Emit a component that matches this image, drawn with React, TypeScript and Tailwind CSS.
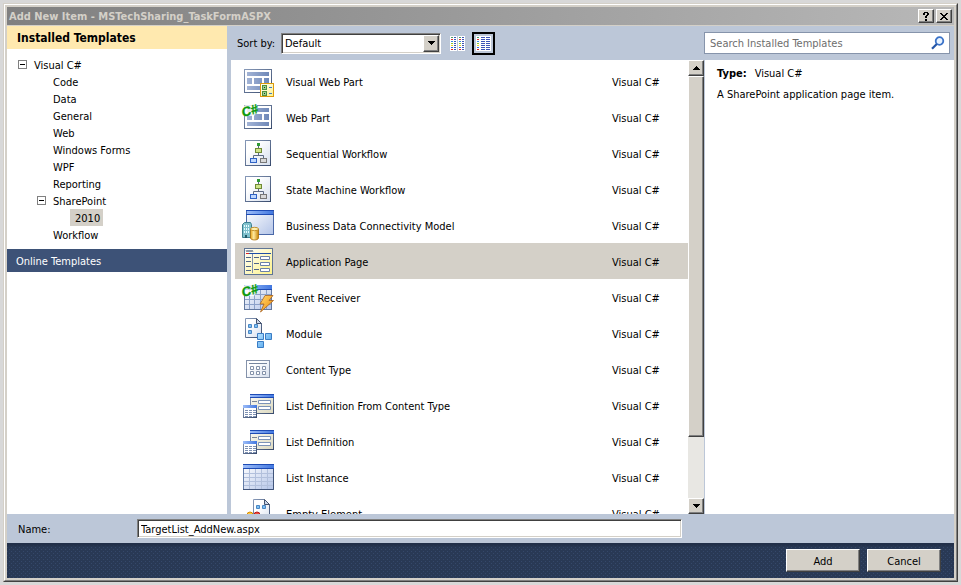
import { useState, type ReactNode } from "react";
import clsx from "clsx";

const RAISED =
  "border border-t-white border-l-white border-r-[#404040] border-b-[#404040] bg-[#d4d0c8] shadow-[inset_-1px_-1px_0_#808080]";
const SUNKEN =
  "border border-t-[#808080] border-l-[#808080] border-r-white border-b-white bg-white shadow-[inset_1px_1px_0_#404040,inset_-1px_-1px_0_#d4d0c8]";

// Shared gradients, referenced by id from every icon below
function IconDefs() {
  return (
    <svg className="absolute h-0 w-0" aria-hidden="true">
      <defs>
        <linearGradient id="bar" x1="0" x2="1">
          <stop offset="0" stopColor="#a3b4d6" />
          <stop offset="1" stopColor="#6f88b8" />
        </linearGradient>
        <linearGradient id="title" x1="0" x2="1">
          <stop offset="0" stopColor="#9dbdf8" />
          <stop offset="1" stopColor="#4177e0" />
        </linearGradient>
        <linearGradient id="pane" x1="0" y1="0" x2="1" y2="1">
          <stop offset="0" stopColor="#ffffff" />
          <stop offset="1" stopColor="#b3c4e8" />
        </linearGradient>
        <linearGradient id="paper" x1="0" y1="0" x2="1" y2="1">
          <stop offset="0.3" stopColor="#ffffff" />
          <stop offset="1" stopColor="#d5deed" />
        </linearGradient>
        <linearGradient id="edge" x1="0" y1="0" x2="1" y2="1">
          <stop offset="0" stopColor="#8799b8" />
          <stop offset="1" stopColor="#3a4c6e" />
        </linearGradient>
        <linearGradient id="cream" x1="0" y1="0" x2="1" y2="1">
          <stop offset="0" stopColor="#ffffff" />
          <stop offset="1" stopColor="#fdf288" />
        </linearGradient>
        <linearGradient id="beige" x1="0" y1="0" x2="1" y2="1">
          <stop offset="0" stopColor="#fbfaf2" />
          <stop offset="1" stopColor="#dcd9c0" />
        </linearGradient>
        <linearGradient id="block" x1="0" y1="0" x2="1" y2="1">
          <stop offset="0" stopColor="#b9e2ff" />
          <stop offset="1" stopColor="#3f9be8" />
        </linearGradient>
        <linearGradient id="gold" x1="0" x2="1">
          <stop offset="0" stopColor="#e8a317" />
          <stop offset="0.4" stopColor="#ffeaa0" />
          <stop offset="1" stopColor="#c98200" />
        </linearGradient>
        <linearGradient id="bolt" x1="0" y1="0" x2="1" y2="1">
          <stop offset="0" stopColor="#ffd873" />
          <stop offset="1" stopColor="#f08a00" />
        </linearGradient>
      </defs>
    </svg>
  );
}

function Icon({ children }: { children: ReactNode }) {
  return (
    <svg width="32" height="32" viewBox="0 0 32 32" className="shrink-0 overflow-visible" aria-hidden="true">
      {children}
    </svg>
  );
}

function CSharpMark() {
  return (
    <text
      x="1"
      y="16"
      transform="rotate(-16 1 16)"
      fontFamily="'Liberation Sans', sans-serif"
      fontWeight="bold"
      fontStyle="italic"
      fontSize="13"
      fill="#0b9a0b"
      stroke="#0b9a0b"
      strokeWidth=".4"
    >
      C#
    </text>
  );
}

function WebPartFrame() {
  return (
    <>
      <rect x="2.5" y="4.5" width="27" height="23" fill="#fff" stroke="url(#edge)" />
      <path fill="url(#bar)" d="M5 7h22v4H5zM5 13h5v6H5zM12 13h8v6h-8zM22 13h5v6h-5zM5 21h22v4H5z" />
    </>
  );
}

function VisualWebPartIcon() {
  return (
    <Icon>
      <WebPartFrame />
      <rect x="18.5" y="18.5" width="13" height="13" fill="url(#cream)" stroke="#dc9a0c" />
      <path fill="#4f8f3f" d="M20 20h5v5h-5zM20 26h5v5h-5z" />
      <path fill="#9fd08f" d="M21 21h3v3h-3zM21 27h3v3h-3z" />
      <path fill="#173f17" d="M22 22h1v1h-1zM22 28h1v1h-1z" />
      <path fill="#3f7ac8" d="M27 22h3v1h-3zM27 28h3v1h-3z" />
    </Icon>
  );
}

function WebPartIcon() {
  return (
    <Icon>
      <WebPartFrame />
      <path fill="#fff" opacity=".75" d="M0 6l9-5 6 0v10l-3 4H1z" />
      <CSharpMark />
    </Icon>
  );
}

function WorkflowIcon() {
  return (
    <Icon>
      <rect x="3.5" y="3.5" width="25" height="25" fill="url(#paper)" stroke="url(#edge)" />
      <path fill="none" stroke="#5c6a84" d="M16.5 9v9M11.5 21v-2.5h10V21" />
      <rect x="15" y="6" width="3" height="3" fill="#2f9a35" />
      <rect x="13.5" y="11.5" width="6" height="4" fill="#cfe48a" stroke="#6f8a35" />
      <rect x="8.5" y="21.5" width="6" height="4" fill="#bcd6ff" stroke="#2f62c4" />
      <rect x="18.5" y="21.5" width="6" height="4" fill="#d8d8d8" stroke="#777" />
    </Icon>
  );
}

function DataModelIcon() {
  return (
    <Icon>
      <rect x="4.5" y="1.5" width="27" height="24" fill="url(#pane)" stroke="#4a68a8" />
      <rect x="5" y="1" width="26" height="4" fill="url(#title)" />
      <path fill="#1d4bb5" d="M4 1h28v1H4zM4 5h28v1H4z" />
      <path fill="#7fc0cc" stroke="#3c8090" d="M.5 15.5l2-2h6l1 2v13h-9z" />
      <path fill="#e6fbff" d="M2 16h1v2H2zM4 16h1v2H4zM6 16h1v2H6zM2 19h1v2H2zM4 19h1v2H4zM6 19h1v2H6zM2 22h1v2H2zM4 22h1v2H4zM6 22h1v2H6z" />
      <path fill="#245a68" d="M3 26h2v3H3z" />
      <path fill="url(#gold)" stroke="#a86c08" strokeWidth=".8" d="M8.500 20v9c0 2.600 8 2.600 8 0v-9z" />
      <ellipse cx="12.500" cy="20" rx="4" ry="1.700" fill="#fff0b0" stroke="#b57c10" strokeWidth=".8" />
    </Icon>
  );
}

function ApplicationPageIcon() {
  return (
    <Icon>
      <rect x="2.500" y="3.500" width="28" height="26" fill="url(#cream)" stroke="#5f7595" />
      <path fill="none" stroke="#5b6b85" strokeWidth=".8" d="M4 5l1 2 1-2 1 2 1-2M8 5l1 2 1-2 1 2" />
      <path fill="#1f4fa8" d="M7 8h22v1H7z" />
      <path fill="#d22" d="M4 8h3v1H4z" />
      <path fill="#7f8fae" d="M10 9h1v19h-1z" />
      <path fill="#4f6488" d="M4 12h5v1H4zM4 16h5v1H4zM4 21h5v1H4zM4 25h5v1H4zM12 12h5v1h-5zM12 18h5v1h-5zM12 24h5v1h-5z" />
      <path fill="#fff" stroke="#6a80a8" d="M18.500 11.500h9v3h-9zM18.500 17.500h9v3h-9zM18.500 23.500h9v3h-9z" />
    </Icon>
  );
}

function EventReceiverIcon() {
  return (
    <Icon>
      <rect x="2.500" y="4.500" width="27" height="24" fill="url(#pane)" stroke="#62789f" />
      <rect x="2" y="4" width="28" height="5" fill="url(#title)" />
      <path fill="#1d4bb5" d="M2 8h28v1H2z" />
      <path fill="none" stroke="#8ba0c8" d="M3 13.500h26M3 18.500h26M3 23.500h26M7.500 9v19M12.500 9v19M18.500 9v19M24.500 9v19" />
      <path fill="url(#bolt)" stroke="#a8611a" strokeWidth=".8" d="M23 14.500h8l-4 5h4.500L18.500 31l3.500-8h-4z" />
      <path fill="#fff" opacity=".75" d="M0 6l9-5 6 0v10l-3 4H1z" />
      <CSharpMark />
    </Icon>
  );
}

function ModuleIcon() {
  return (
    <Icon>
      <path fill="url(#paper)" stroke="url(#edge)" d="M3.500 1.500h11l5 5v14h-16z" />
      <path fill="#cdd7e8" stroke="#44536f" d="M14.500 1.500v5h5z" />
      <path fill="#7cc0f4" stroke="#4a86c4" d="M6.500 7.500h3v3h-3zM12.500 7.500h3v3h-3zM6.500 13.500h3v3h-3z" />
      <path fill="url(#block)" stroke="#3a7cc4" d="M15.500 16.500h6v6h-6zM23.500 16.500h6v6h-6zM15.500 24.500h6v6h-6z" />
    </Icon>
  );
}

function ContentTypeIcon() {
  return (
    <Icon>
      <rect x="4.500" y="7.500" width="23" height="17" fill="url(#paper)" stroke="#8492aa" />
      <path fill="#76869f" d="M7 10h18v1H7z" />
      <path fill="#fff" stroke="#8492aa" d="M8.500 13.500h3v3h-3zM14.500 13.500h3v3h-3zM20.500 13.500h3v3h-3zM8.500 18.500h3v3h-3zM14.500 18.500h3v3h-3zM20.500 18.500h3v3h-3z" />
    </Icon>
  );
}

function ListDefinitionIcon() {
  return (
    <Icon>
      <rect x="8.500" y="5.500" width="23" height="19" fill="url(#beige)" stroke="url(#edge)" />
      <rect x="8" y="5" width="24" height="4" fill="url(#title)" />
      <path fill="#1d4bb5" d="M8 5h24v1H8zM8 8h24v1H8z" />
      <path fill="#7a8494" d="M10 12h5v1h-5z" />
      <path fill="#fff" stroke="#7c93b8" d="M16.500 11.500h12v3h-12zM16.500 17.500h12v3h-12z" />
      <rect x="1.500" y="16.500" width="13" height="12" fill="#fff" stroke="url(#edge)" />
      <rect x="1" y="16" width="14" height="3" fill="url(#title)" />
      <path fill="none" stroke="#7d90b2" strokeDasharray="3 1" d="M3 21.500h11M3 23.500h11M3 25.500h11M3 27.500h11" />
    </Icon>
  );
}

function ListInstanceIcon() {
  return (
    <Icon>
      <rect x="1.500" y="3.500" width="30" height="25" fill="url(#pane)" stroke="#647da8" />
      <rect x="1" y="3" width="31" height="5" fill="url(#title)" />
      <path fill="#1d4bb5" d="M1 3h31v1H1zM1 7h31v1H1z" />
      <path fill="none" stroke="#b2c0dc" d="M2 12.500h29M2 16.500h29M2 20.500h29M2 24.500h29M7.500 8v20M13.500 8v20M19.500 8v20M25.500 8v20" />
      <path fill="none" stroke="#40547a" d="M1 28.500h30.500V8" />
    </Icon>
  );
}

function EmptyElementIcon() {
  return (
    <Icon>
      <path fill="url(#paper)" stroke="url(#edge)" d="M11.500 2.500h11l5 5v21h-16z" />
      <path fill="#cdd7e8" stroke="#44536f" d="M22.500 2.500v5h5z" />
      <path fill="#7cc0f4" stroke="#4a86c4" d="M14.500 8.500h3v3h-3zM20.500 8.500h3v3h-3z" />
      <circle cx="8" cy="18" r="3" fill="#ffc93a" stroke="#d88a00" />
      <circle cx="15" cy="18" r="3" fill="#f04a3a" stroke="#b81818" />
    </Icon>
  );
}

const TEMPLATES = [
  { name: "Visual Web Part", icon: VisualWebPartIcon },
  { name: "Web Part", icon: WebPartIcon },
  { name: "Sequential Workflow", icon: WorkflowIcon },
  { name: "State Machine Workflow", icon: WorkflowIcon },
  { name: "Business Data Connectivity Model", icon: DataModelIcon },
  { name: "Application Page", icon: ApplicationPageIcon },
  { name: "Event Receiver", icon: EventReceiverIcon },
  { name: "Module", icon: ModuleIcon },
  { name: "Content Type", icon: ContentTypeIcon },
  { name: "List Definition From Content Type", icon: ListDefinitionIcon },
  { name: "List Definition", icon: ListDefinitionIcon },
  { name: "List Instance", icon: ListInstanceIcon },
  { name: "Empty Element", icon: EmptyElementIcon },
];

const TREE = [
  { label: "Visual C#", level: 0, open: true },
  { label: "Code", level: 1 },
  { label: "Data", level: 1 },
  { label: "General", level: 1 },
  { label: "Web", level: 1 },
  { label: "Windows Forms", level: 1 },
  { label: "WPF", level: 1 },
  { label: "Reporting", level: 1 },
  { label: "SharePoint", level: 1, open: true },
  { label: "2010", level: 2 },
  { label: "Workflow", level: 1 },
];

const INDENT = ["pl-[11px]", "pl-[30px]", "pl-[52px]"];

function TitleBar() {
  return (
    <header className="flex h-[18px] items-center gap-[2px] bg-linear-to-r from-[#808080] to-[#b8b8b8] pr-[2px] pl-[2px]">
      <h1 className="flex-1 pt-px text-[11px] font-bold text-[#d4d0c8]">
        Add New Item - MSTechSharing_TaskFormASPX
      </h1>
      <button aria-label="Help" className={clsx(RAISED, "flex h-[14px] w-4 items-center justify-center")}>
        <svg width="8" height="9" viewBox="0 0 8 9">
          <path fill="#000" d="M2 0h4v1H2zM1 1h2v2H1zM5 1h2v2H5zM4 3h2v1H4zM3 4h2v2H3zM3 7h2v2H3z" />
        </svg>
      </button>
      <button aria-label="Close" className={clsx(RAISED, "flex h-[14px] w-4 items-center justify-center")}>
        <svg width="8" height="7" viewBox="0 0 8 7">
          <path fill="#000" d="M0 0h2v1H0zM6 0h2v1H6zM1 1h2v1H1zM5 1h2v1H5zM2 2h4v1H2zM3 3h2v1H3zM2 4h4v1H2zM1 5h2v1H1zM5 5h2v1H5zM0 6h2v1H0zM6 6h2v1H6z" />
        </svg>
      </button>
    </header>
  );
}

function TemplateTree() {
  const [active, setActive] = useState("2010");

  return (
    <nav className="flex w-[220px] shrink-0 flex-col bg-white">
      <h2 className="flex h-[23px] items-center bg-[#ffe9af] pt-px pl-[10px] text-[12px] font-bold">
        Installed Templates
      </h2>
      <ul className="pt-[7px] pb-[6px]">
        {TREE.map((node) => (
          <li key={node.label} className={clsx("flex h-[17px] items-center", INDENT[node.level])}>
            <span className="flex w-[11px] shrink-0">
              {node.open && (
                <svg width="9" height="9" viewBox="0 0 9 9" aria-hidden="true">
                  <rect x=".5" y=".5" width="8" height="8" fill="#fff" stroke="#808080" />
                  <path fill="#000" d="M2 4h5v1H2z" />
                </svg>
              )}
            </span>
            <button
              className={clsx("h-[17px] pt-[2px] pr-[3px] pl-[5px]", active === node.label && "bg-[#d4d0c8]")}
              onClick={() => setActive(node.label)}
            >
              {node.label}
            </button>
          </li>
        ))}
      </ul>
      <button className="flex h-[23px] items-center bg-[#3d5277] pt-[2px] pl-[9px] text-white">
        Online Templates
      </button>
    </nav>
  );
}

const SWATCHES = ["#4b9c6b", "#e03030", "#3a8be0", "#8cc832", "#e8d820", "#3a6be0", "#e02020"];

function ListViewIcon({ detailed = false }: { detailed?: boolean }) {
  return (
    <svg width="15" height="15" viewBox="0 0 15 15" aria-hidden="true">
      <path fill="#fff" d={detailed ? "M0 0h15v15H0z" : "M0 0h7v15H0zM8 0h7v15H8z"} />
      {SWATCHES.map((color, i) => {
        const y = 1 + i * 2;
        return (
          <g key={color}>
            <rect x="1" y={y} width="2" height="1" fill={color} />
            <rect x={detailed ? 5 : 4} y={y} width={detailed ? 4 : 2} height="1" fill="#3d55b8" />
            {!detailed && <rect x="9" y={y} width="2" height="1" fill={color} />}
            <rect x={detailed ? 10 : 12} y={y} width={detailed ? 4 : 2} height="1" fill="#3d55b8" />
          </g>
        );
      })}
    </svg>
  );
}

function Toolbar() {
  return (
    <div className="flex h-[34px] shrink-0 items-center pr-1 pl-[10px]">
      <label htmlFor="sort" className="w-11 pt-px">
        Sort by:
      </label>
      <div className="relative h-[21px] w-[160px]">
        <select id="sort" className={clsx(SUNKEN, "h-[21px] w-full appearance-none pt-px pl-[3px] outline-none")}>
          <option>Default</option>
          <option>Name Ascending</option>
          <option>Name Descending</option>
        </select>
        <span className={clsx(RAISED, "pointer-events-none absolute top-[2px] right-[2px] flex h-[17px] w-4 items-center justify-center")}>
          <svg width="7" height="4" viewBox="0 0 7 4">
            <path d="M0 0h7v1H6v1H5v1H4v1H3V3H2V2H1V1H0z" />
          </svg>
        </span>
      </div>
      <button aria-label="Small icons" className="ml-[5px] flex h-[23px] w-[23px] items-center justify-center">
        <ListViewIcon />
      </button>
      <button aria-label="Medium icons" className="ml-[3px] flex h-[23px] w-[23px] items-center justify-center border-2 border-black">
        <ListViewIcon detailed />
      </button>
      <div className="ml-auto flex h-[22px] w-[246px] items-center border border-[#8694ab] bg-white pr-1 pl-[5px]">
        <input
          type="search"
          aria-label="Search Installed Templates"
          placeholder="Search Installed Templates"
          className="min-w-0 flex-1 pt-[2px] outline-none placeholder:text-[#6d6d6d]"
        />
        <svg width="14" height="14" viewBox="0 0 14 14" aria-hidden="true">
          <circle cx="8.500" cy="5" r="3.800" fill="#e8f3ff" stroke="#3a72c8" strokeWidth="1.800" />
          <path stroke="#2456a8" strokeWidth="2.200" d="M5.800 8L1 12.800" />
        </svg>
      </div>
    </div>
  );
}

function ScrollBar() {
  return (
    <div className="flex w-4 shrink-0 flex-col bg-[#e8e7e3]">
      <button aria-label="Scroll up" className={clsx(RAISED, "flex h-4 items-center justify-center")}>
        <svg width="7" height="4" viewBox="0 0 7 4">
          <path d="M3 0h1v1h1v1h1v1h1v1H0V3h1V2h1V1h1z" />
        </svg>
      </button>
      <div className={clsx(RAISED, "flex-1")} />
      <div className="h-[61px]" />
      <button aria-label="Scroll down" className={clsx(RAISED, "flex h-4 items-center justify-center")}>
        <svg width="7" height="4" viewBox="0 0 7 4">
          <path d="M0 0h7v1H6v1H5v1H4v1H3V3H2V2H1V1H0z" />
        </svg>
      </button>
    </div>
  );
}

function TemplateList() {
  const [selected, setSelected] = useState("Application Page");

  return (
    <div className="flex min-w-0 flex-1 bg-white">
      <ul className="min-w-0 flex-1 overflow-hidden pt-[3px] pl-1">
        {TEMPLATES.map(({ name, icon: TemplateIcon }) => (
          <li key={name}>
            <button
              className={clsx("flex h-9 w-full items-center pl-[7px] text-left", selected === name && "bg-[#d4d0c8]")}
              onClick={() => setSelected(name)}
            >
              <TemplateIcon />
              <span className="ml-3 flex-1 pt-[3px]">{name}</span>
              <span className="w-[76px] pt-[3px]">Visual C#</span>
            </button>
          </li>
        ))}
      </ul>
      <ScrollBar />
    </div>
  );
}

export default function App() {
  const [fileName, setFileName] = useState("TargetList_AddNew.aspx");

  return (
    <div className="h-screen bg-[#d8d8d8] p-[3px] font-['DejaVu_Sans_Condensed','DejaVu_Sans',sans-serif] text-[11px] leading-[14px] text-black">
      <IconDefs />
      <div className="h-full border border-t-[#d4d0c8] border-r-[#404040] border-b-[#404040] border-l-[#d4d0c8]">
        <div className="flex h-full flex-col border border-t-white border-r-[#808080] border-b-[#808080] border-l-white bg-[#d4d0c8] p-[2px]">
          <TitleBar />
          <main className="mt-px flex min-h-0 flex-1 bg-[#bcc7d8]">
            <TemplateTree />
            <section className="flex min-w-0 flex-1 flex-col">
              <Toolbar />
              <div className="flex min-h-0 flex-1 gap-px pl-1">
                <TemplateList />
                <aside className="w-[249px] shrink-0 bg-white px-3 pt-[7px]">
                  <p>
                    <strong>Type:</strong>
                    <span className="ml-[8px]">Visual C#</span>
                  </p>
                  <p className="mt-[7px]">A SharePoint application page item.</p>
                </aside>
              </div>
            </section>
          </main>
          <div className="flex h-[29px] shrink-0 items-center bg-[#bcc7d8] pl-[11px]">
            <label htmlFor="name" className="w-[119px] pt-[2px]">
              Name:
            </label>
            <input
              id="name"
              value={fileName}
              onChange={(e) => setFileName(e.target.value)}
              className={clsx(SUNKEN, "h-[19px] w-[545px] pt-px pl-[3px] outline-none")}
            />
          </div>
          <footer className="flex h-[35px] shrink-0 items-center justify-end gap-[7px] bg-[#293955] bg-[conic-gradient(at_1px_1px,transparent_270deg,#35486a_0),conic-gradient(at_1px_1px,transparent_270deg,#35486a_0)] bg-size-[4px_4px] bg-position-[0_0,2px_2px] pr-[13px] shadow-[inset_0_3px_2px_#22304a]">
            <button className={clsx(RAISED, "h-[23px] w-[74px] pt-[2px]")}>Add</button>
            <button className={clsx(RAISED, "h-[23px] w-[74px] pt-[2px]")}>Cancel</button>
          </footer>
        </div>
      </div>
    </div>
  );
}
